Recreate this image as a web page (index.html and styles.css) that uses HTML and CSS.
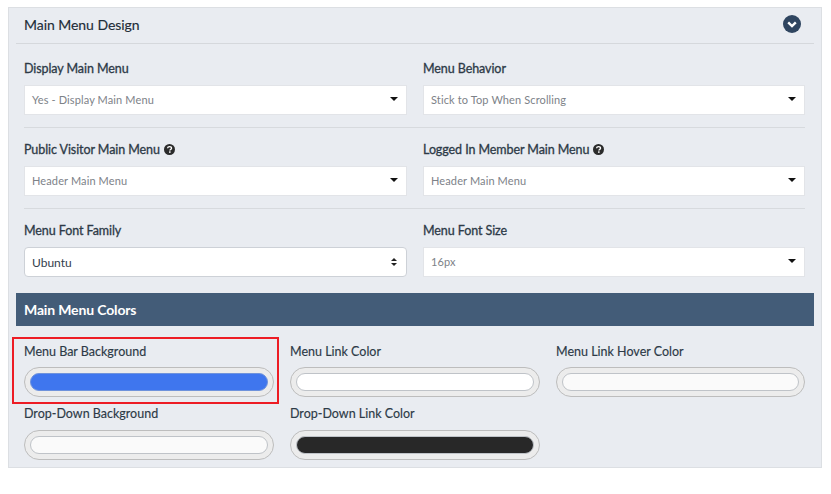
FILE: index.html
```html
<!DOCTYPE html>
<html lang="en">
<head>
<meta charset="utf-8">
<title>Main Menu Design</title>
<link rel="stylesheet" href="styles.css">
</head>
<body>
<section class="panel">
  <header class="panel-head">
    <h2 class="panel-title">Main Menu Design</h2>
    <svg class="toggle" viewBox="0 0 18 18" aria-hidden="true"><circle cx="9" cy="9" r="9" fill="#2f4560"/><path d="M5.200 7.400 9 11.100l3.800-3.700" fill="none" stroke="#fff" stroke-width="2.400"/></svg>
  </header>
  <div class="form-row row-first">
    <div class="field"><div class="label">Display Main Menu</div><div class="select flat"><span>Yes - Display Main Menu</span><i class="caret"></i></div></div>
    <div class="field"><div class="label">Menu Behavior</div><div class="select flat"><span>Stick to Top When Scrolling</span><i class="caret"></i></div></div>
  </div>
  <div class="form-row">
    <div class="field"><div class="label">Public Visitor Main Menu <svg class="help" viewBox="0 0 12 12" aria-hidden="true"><circle cx="6" cy="6" r="6" fill="#2b2b2b"/><path d="M3.900 4.700C4 3.400 5 2.800 6.100 2.800c1.100 0 2.100.7 2.100 1.800 0 1.400-1.800 1.300-1.800 2.500" fill="none" stroke="#fff" stroke-width="1.500"/><rect x="5.500" y="8" width="1.700" height="1.600" fill="#fff"/></svg></div><div class="select flat"><span>Header Main Menu</span><i class="caret"></i></div></div>
    <div class="field"><div class="label">Logged In Member Main Menu <svg class="help" viewBox="0 0 12 12" aria-hidden="true"><circle cx="6" cy="6" r="6" fill="#2b2b2b"/><path d="M3.900 4.700C4 3.400 5 2.800 6.100 2.800c1.100 0 2.100.7 2.100 1.800 0 1.400-1.800 1.300-1.800 2.500" fill="none" stroke="#fff" stroke-width="1.500"/><rect x="5.500" y="8" width="1.700" height="1.600" fill="#fff"/></svg></div><div class="select flat"><span>Header Main Menu</span><i class="caret"></i></div></div>
  </div>
  <div class="form-row last">
    <div class="field"><div class="label">Menu Font Family</div><div class="select rounded"><span>Ubuntu</span><i class="updown"><i class="up"></i><i class="down"></i></i></div></div>
    <div class="field"><div class="label">Menu Font Size</div><div class="select flat"><span>16px</span><i class="caret"></i></div></div>
  </div>
  <h3 class="band">Main Menu Colors</h3>
  <div class="colors">
    <div class="color-field highlighted"><div class="label">Menu Bar Background</div><div class="pill"><div class="swatch blue"></div></div></div>
    <div class="color-field"><div class="label">Menu Link Color</div><div class="pill"><div class="swatch white"></div></div></div>
    <div class="color-field"><div class="label">Menu Link Hover Color</div><div class="pill"><div class="swatch off"></div></div></div>
    <div class="color-field"><div class="label">Drop-Down Background</div><div class="pill"><div class="swatch off"></div></div></div>
    <div class="color-field"><div class="label">Drop-Down Link Color</div><div class="pill"><div class="swatch dark"></div></div></div>
  </div>
</section>
</body>
</html>
```
FILE: styles.css
```css
* { box-sizing: border-box; }
html, body { height: 100%; }
body {
  margin: 7px 8px 8px;
  background: #fff;
  font-family: "Lato", "Noto Sans", sans-serif;
  color: #2d3a47;
  overflow: hidden;
}
.panel {
  width: 814px;
  height: 461px;
  background: #e9ecf1;
  border: 1px solid #dcdfe3;
  padding: 0 7px;
}
.panel-head {
  height: 36px;
  display: flex;
  align-items: center;
  justify-content: space-between;
  padding: 0 13px 3px 8px;
  border-bottom: 1px solid #d5d8dc;
}
.panel-title {
  margin: 0;
  font-size: 14px;
  font-weight: 400;
  letter-spacing: -.05px;
  color: #222d38;
  -webkit-text-stroke: .15px #222d38;
}
.toggle { width: 18px; height: 18px; display: block; }
.form-row {
  margin: 0 9px 0 8px;
  display: grid;
  grid-template-columns: 383px 382px;
  column-gap: 16px;
  height: 81px;
  padding-top: 12px;
  border-bottom: 1px solid #d7dade;
}
.form-row.row-first { height: 84px; padding-top: 15px; }
.form-row.last { border-bottom: 0; height: 84px; }
.label {
  height: 18px;
  display: flex;
  align-items: center;
  gap: 4px;
  margin-bottom: 8px;
  font-size: 12.5px;
  font-weight: 400;
  letter-spacing: -.08px;
  color: #2d3a47;
  white-space: nowrap;
  -webkit-text-stroke: .3px #2d3a47;
}
.help { width: 11px; height: 11px; display: block; }
.select {
  height: 30px;
  background: #fff;
  display: flex;
  align-items: center;
  justify-content: space-between;
  padding: 0 8px 0 7px;
  font-size: 11px;
  letter-spacing: .12px;
  color: #7d8288;
}
.select.flat { border: 1px solid #e2e4e8; padding-bottom: 2px; }
.select.rounded {
  border: 1px solid #cdd1d7;
  border-radius: 4px;
  font-size: 12px;
  letter-spacing: 0;
  color: #33404d;
}
.caret {
  width: 0; height: 0;
  margin-top: -1px;
  border-left: 4px solid transparent;
  border-right: 4px solid transparent;
  border-top: 4px solid #111;
}
.updown { display: flex; flex-direction: column; gap: 2px; margin-right: 1px; }
.up { width: 0; height: 0; border-left: 3.500px solid transparent; border-right: 3.500px solid transparent; border-bottom: 3.500px solid #222; }
.down { width: 0; height: 0; border-left: 3.500px solid transparent; border-right: 3.500px solid transparent; border-top: 3.500px solid #222; }
.band {
  margin: 0;
  height: 33px;
  line-height: 33px;
  padding-left: 8px;
  background: #435c78;
  color: #fff;
  font-size: 14px;
  font-weight: 700;
  letter-spacing: -.15px;
}
.colors {
  margin: 0 9px 0 8px;
  display: grid;
  grid-template-columns: 250px 250px 249px;
  column-gap: 16px;
  row-gap: 7px;
  padding-top: 16px;
}
.color-field { position: relative; height: 55px; }
.color-field .label { margin-bottom: 7px; letter-spacing: 0; -webkit-text-stroke: .15px #2d3a47; }
.color-field:nth-child(n+4) .label { margin-bottom: 8px; }
.highlighted::after {
  content: "";
  box-sizing: border-box;
  position: absolute;
  left: -12px; top: -5px;
  width: 267px; height: 67px;
  border: 2px solid #ed1c24;
  pointer-events: none;
}
.pill {
  height: 30px;
  padding: 5px;
  background: #ececec;
  border: 1px solid #bdbdbd;
  border-radius: 15px;
}
.swatch { height: 18px; border-radius: 9px; border: 1px solid #bfc3c8; }
.blue { background: #3f76ee; border-color: #6f93dc; }
.white { background: #fff; }
.off { background: #fafafa; }
.dark { background: #282828; }
```
